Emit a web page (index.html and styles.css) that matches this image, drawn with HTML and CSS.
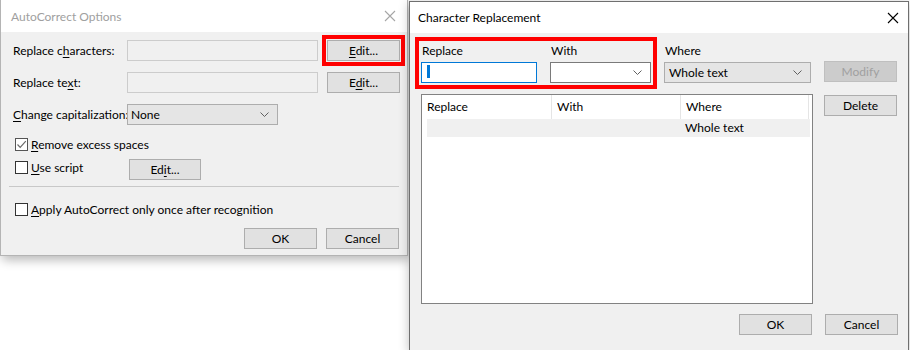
FILE: index.html
```html
<!DOCTYPE html>
<html>
<head>
    <meta charset="utf-8">
    <title>AutoCorrect Options</title>
    <link rel="stylesheet" href="styles.css">
</head>
<body>
    <div class="desk">
        <!-- inactive dialog -->
        <div class="dialog dialog-left">
            <div class="titlebar inactive">
                <span class="title">AutoCorrect Options</span>
                <svg class="close" width="12" height="12" viewBox="0 0 12 12"><path d="M1 1 L11 11 M11 1 L1 11" stroke="#a6a6a6" stroke-width="1.1" fill="none"/></svg>
            </div>
            <div class="dialog-body left-body">
                <div class="opt-grid">
                    <span class="lbl">Replace c<u>h</u>aracters:</span>
                    <div class="textbox disabled"></div>
                    <button class="btn btn-marked"><u>E</u>dit...</button>

                    <span class="lbl">Replace te<u>x</u>t:</span>
                    <div class="textbox disabled"></div>
                    <button class="btn">E<u>d</u>it...</button>

                    <span class="lbl"><u>C</u>hange capitalization:</span>
                    <div class="combo combo-none">
                        <span>None</span>
                        <svg class="chev" width="9" height="5" viewBox="0 0 9 5"><path d="M0.5 0.5 L4.5 4.5 L8.5 0.5" stroke="#606060" fill="none"/></svg>
                    </div>
                </div>

                <label class="check-row first">
                    <span class="checkbox checked">
                        <svg width="11" height="11" viewBox="0 0 11 11"><path d="M1.5 5.5 L4.2 8.3 L9.8 2.2" stroke="#6a6a6a" stroke-width="1.2" fill="none"/></svg>
                    </span>
                    <span><u>R</u>emove excess spaces</span>
                </label>

                <div class="script-row">
                    <label class="check-row">
                        <span class="checkbox"></span>
                        <span><u>U</u>se script</span>
                    </label>
                    <button class="btn btn-script">Ed<u>i</u>t...</button>
                </div>

                <div class="separator"></div>

                <label class="check-row">
                    <span class="checkbox"></span>
                    <span><u>A</u>pply AutoCorrect only once after recognition</span>
                </label>

                <div class="button-row left-buttons">
                    <button class="btn">OK</button>
                    <button class="btn">Cancel</button>
                </div>
            </div>
        </div>

        <!-- active dialog -->
        <div class="dialog dialog-right">
            <div class="titlebar">
                <span class="title">Character Replacement</span>
                <svg class="close" width="12" height="12" viewBox="0 0 12 12"><path d="M1 1 L11 11 M11 1 L1 11" stroke="#000" stroke-width="1.1" fill="none"/></svg>
            </div>
            <div class="dialog-body right-body">
                <div class="top-row">
                    <div class="marked-group">
                        <div class="field field-replace">
                            <span class="field-lbl">Replace</span>
                            <div class="textbox focused"><span class="caret"></span></div>
                        </div>
                        <div class="field field-with">
                            <span class="field-lbl">With</span>
                            <div class="combo combo-white">
                                <span></span>
                                <svg class="chev" width="9" height="5" viewBox="0 0 9 5"><path d="M0.5 0.5 L4.5 4.5 L8.5 0.5" stroke="#606060" fill="none"/></svg>
                            </div>
                        </div>
                    </div>
                    <div class="field field-where">
                        <span class="field-lbl">Where</span>
                        <div class="combo">
                            <span>Whole text</span>
                            <svg class="chev" width="9" height="5" viewBox="0 0 9 5"><path d="M0.5 0.5 L4.5 4.5 L8.5 0.5" stroke="#606060" fill="none"/></svg>
                        </div>
                    </div>
                    <button class="btn side-btn btn-disabled">Modify</button>
                </div>

                <div class="mid-row">
                    <div class="listview">
                        <div class="lv-head">
                            <span class="lv-col">Replace</span>
                            <span class="lv-col">With</span>
                            <span class="lv-col">Where</span>
                        </div>
                        <div class="lv-row">
                            <span class="lv-cell"></span>
                            <span class="lv-cell"></span>
                            <span class="lv-cell">Whole text</span>
                        </div>
                    </div>
                    <button class="btn side-btn">Delete</button>
                </div>

                <div class="button-row right-buttons">
                    <button class="btn">OK</button>
                    <button class="btn">Cancel</button>
                </div>
            </div>
        </div>
    </div>
</body>
</html>
```

FILE: styles.css
```css
body {
    margin: 0;
    background-color: #ffffff;
    font-family: 'Lato', 'Noto Sans', sans-serif;
    font-size: 12px;
    color: #000000;
    overflow: hidden;
}

u {
    text-decoration-thickness: 1px;
    text-underline-offset: 2px;
}

.desk {
    display: flex;
    align-items: flex-start;
    gap: 1px;
    width: 910px;
    height: 350px;
}

.dialog {
    display: flex;
    flex-direction: column;
    background-color: #f0f0f0;
    box-sizing: border-box;
}

.dialog-left {
    width: 408px;
    height: 256px;
    border: 1px solid #b4b4b4;
    border-top: none;
    box-shadow: 2px 4px 10px rgba(0, 0, 0, 0.28);
}

.dialog-right {
    width: 500px;
    height: 350px;
    margin-top: 1px;
    border: 1px solid #6f6f6f;
    box-shadow: 0 2px 10px rgba(0, 0, 0, 0.25);
}

.titlebar {
    height: 31px;
    flex-shrink: 0;
    background-color: #ffffff;
    display: flex;
    align-items: center;
    justify-content: space-between;
    padding: 0 9px 0 8px;
}

.titlebar .title {
    font-size: 12px;
}

.titlebar.inactive .title {
    color: #a0a0a0;
    padding-left: 2px;
}

.dialog-left .titlebar {
    height: 32px;
    padding-right: 11px;
}

.dialog-body {
    flex: 1;
    display: flex;
    flex-direction: column;
}

/* left dialog */

.left-body {
    padding: 8px 8px 0 12px;
}

.opt-grid {
    display: grid;
    grid-template-columns: 105px 191px 72px;
    grid-auto-rows: 21px;
    column-gap: 9px;
    row-gap: 11px;
    align-items: center;
}

.lbl {
    line-height: 21px;
    white-space: nowrap;
}

.textbox {
    height: 21px;
    box-sizing: border-box;
    border: 1px solid #7a7a7a;
    background-color: #ffffff;
}

.textbox.disabled {
    border-color: #cccccc;
    background-color: #f0f0f0;
}

.textbox.focused {
    border-color: #0078d7;
    position: relative;
}

.caret {
    position: absolute;
    left: 5px;
    top: 2px;
    width: 3px;
    height: 13px;
    background-color: #0078d7;
}

.btn {
    height: 21px;
    width: 73px;
    box-sizing: border-box;
    padding: 0;
    border: 1px solid #adadad;
    background-color: #e1e1e1;
    font-family: inherit;
    font-size: 12px;
    color: #000000;
}

.btn-marked {
    outline: 4px solid #ff0000;
    outline-offset: 1px;
}

.btn-disabled {
    background-color: #cccccc;
    border-color: #bfbfbf;
    color: #a0a0a0;
}

.combo {
    height: 21px;
    box-sizing: border-box;
    border: 1px solid #adadad;
    background-color: #e5e5e5;
    display: flex;
    align-items: center;
    justify-content: space-between;
    padding: 0 8px 0 3px;
}

.combo-none {
    width: 151px;
}

.combo-white {
    background-color: #ffffff;
    border-color: #7a7a7a;
}

.check-row {
    display: flex;
    align-items: center;
    gap: 3px;
    padding-left: 2px;
    height: 16px;
}

.check-row.first {
    margin-top: 11px;
}

.checkbox {
    width: 13px;
    height: 13px;
    box-sizing: border-box;
    border: 1px solid #333333;
    background-color: #ffffff;
    display: flex;
    align-items: center;
    justify-content: center;
}

.checkbox.checked {
    border-color: #555555;
}

.script-row {
    display: flex;
    align-items: center;
    margin-top: 2px;
    height: 26px;
}

.script-row .check-row {
    width: 114px;
}

.btn-script {
    width: 72px;
    margin-top: 4px;
}

.separator {
    height: 1px;
    background-color: #c8c8c8;
    margin: 6px 0 0 -4px;
}

.separator + .check-row {
    margin-top: 14px;
}

.button-row {
    display: flex;
    justify-content: flex-end;
    gap: 9px;
}

.left-buttons {
    margin-top: 11px;
}

.left-buttons .btn {
    width: 73px;
}

/* right dialog */

.right-body {
    padding: 10px 10px 0 11px;
}

.top-row {
    display: flex;
    align-items: flex-end;
}

.marked-group {
    display: flex;
    gap: 13px;
    outline: 4px solid #ff0000;
    outline-offset: 2px;
}

.field {
    display: flex;
    flex-direction: column;
    gap: 3px;
}

.field-lbl {
    line-height: 16px;
    padding-left: 1px;
}

.field-replace .textbox {
    width: 116px;
}

.field-with .combo {
    width: 101px;
}

.field-where {
    margin-left: 13px;
}

.field-where .combo {
    width: 147px;
    padding-left: 4px;
}

.side-btn {
    margin-left: 13px;
    margin-bottom: 1px;
}

.mid-row {
    display: flex;
    align-items: flex-start;
    margin-top: 11px;
}

.mid-row .side-btn {
    margin-left: 11px;
    margin-top: 1px;
}

.listview {
    width: 392px;
    height: 210px;
    box-sizing: border-box;
    border: 1px solid #828282;
    background-color: #ffffff;
}

.lv-head {
    display: grid;
    grid-template-columns: 130px 129px 128px;
    height: 24px;
}

.lv-col {
    border-right: 1px solid #e5e5e5;
    padding-left: 5px;
    line-height: 24px;
}

.lv-row {
    display: grid;
    grid-template-columns: 125px 129px 129px;
    margin-left: 5px;
    width: 383px;
    height: 18px;
    background-color: #f0f0f0;
}

.lv-cell {
    line-height: 18px;
    padding-left: 4px;
}

.right-buttons {
    margin-top: 10px;
    gap: 13px;
}
```
